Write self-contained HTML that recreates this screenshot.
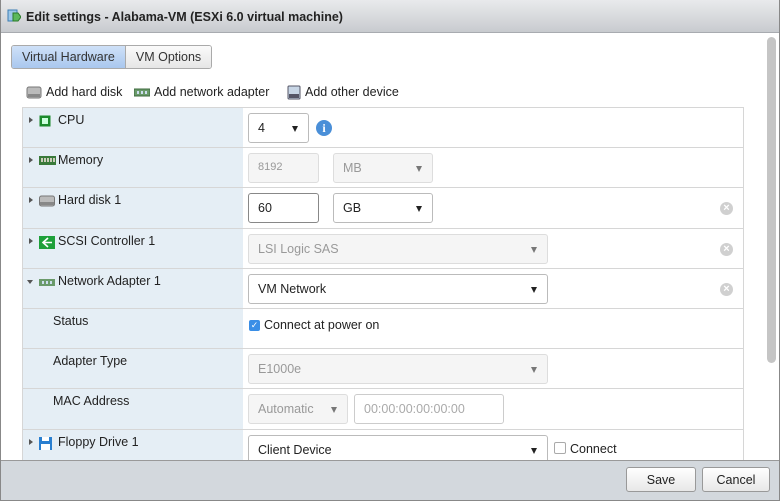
<!DOCTYPE html>
<html><head><style>
*{box-sizing:border-box;margin:0;padding:0}
body{width:780px;height:501px;overflow:hidden;font-family:"Liberation Sans",sans-serif;font-size:12px;color:#333;background:#fff;position:relative}
.win{position:absolute;left:0;top:0;width:780px;height:501px;border:1px solid #888;border-top:none;z-index:5;pointer-events:none}
.title{position:absolute;left:0;top:0;width:780px;height:33px;background:linear-gradient(#e9eaec,#c8cbcf);border-bottom:1px solid #a8abb0;font-weight:bold;font-size:12.5px;color:#222;padding:10px 0 0 26px}
.tabs{position:absolute;left:11px;top:45px;height:24px;display:flex;border:1px solid #aaa;border-radius:3px;overflow:hidden}
.tabs div{padding:4px 10px;font-size:12.5px}
.tabs .a{background:linear-gradient(#cfe1f8,#a9c7ee);border-right:1px solid #aaa}
.tabs .b{background:linear-gradient(#fafafa,#e6e6e6)}
.tool{position:absolute;top:85px;font-size:12.5px;color:#222}
.ico{display:inline-block;vertical-align:middle;margin-right:4px}
.tbl{position:absolute;left:22px;top:107px;width:722px;height:360px;border:1px solid #d6d6d6;border-bottom:none;overflow:hidden}
.lc{position:absolute;left:0;top:0;width:220px;height:100%;background:#e5eef5}
.row{position:absolute;left:0;width:722px;height:40px;border-bottom:1px solid #d6d6d6}
.lab{position:absolute;left:35px;top:5px;font-size:12.5px;color:#222}
.sub{left:30px}
.tri{position:absolute;left:6px;top:9px;width:0;height:0;border-top:3.5px solid transparent;border-bottom:3.5px solid transparent;border-left:4px solid #555}
.trid{position:absolute;left:4px;top:11px;border-left:3.5px solid transparent;border-right:3.5px solid transparent;border-top:4px solid #555}
.ic{position:absolute;left:16px;top:7px}
.f{position:absolute;top:5px;height:30px;border:1px solid #bbb;border-radius:3px;background:#fff;padding:7px 9px;font-size:12.5px;color:#222}
.f.d{background:#f5f5f5;border-color:#ddd;color:#999}
.ar{position:absolute;right:10px;top:12px;border-left:3.5px solid transparent;border-right:3.5px solid transparent;border-top:6px solid #222}
.f.d .ar{border-top-color:#777}
.x{position:absolute;left:697px;top:14px;width:13px;height:13px;border-radius:50%;background:#d0d0d0;color:#fff;font-size:11px;line-height:13px;text-align:center;font-weight:bold}
.foot{position:absolute;left:0;top:460px;width:780px;height:41px;background:#d3d8dd;border-top:1px solid #999}
.btn{position:absolute;top:467px;height:25px;border:1px solid #999;border-radius:3px;background:linear-gradient(#fff,#e8e8e8);font-size:12.5px;text-align:center;padding-top:5px;color:#222}
.sb{position:absolute;left:767px;top:37px;width:9px;height:326px;border-radius:5px;background:#c5c5c5}
</style></head><body>
<div class="title"><svg style="position:absolute;left:7px;top:9px" width="14" height="15"><rect x="1" y="1" width="9" height="11" fill="#9cc7e8" stroke="#3a7db5"/><path d="M6 4h5l3 4-3 4H6z" fill="#5cb85c" stroke="#2a7a2a"/></svg>Edit settings - Alabama-VM (ESXi 6.0 virtual machine)</div>
<div class="tabs"><div class="a">Virtual Hardware</div><div class="b">VM Options</div></div>
<div class="tool" style="left:26px"><svg class="ico" width="16" height="13"><rect x="1" y="1" width="14" height="11" rx="2" fill="#bbb" stroke="#777"/><rect x="2" y="8" width="12" height="3" fill="#888"/></svg>Add hard disk</div>
<div class="tool" style="left:134px"><svg class="ico" width="16" height="9"><rect x="0" y="1" width="16" height="7" fill="#6a9a6a" stroke="#3c6a3c"/><path d="M3 3h2v3H3zM7 3h2v3H7zM11 3h2v3h-2z" fill="#cde"/></svg>Add network adapter</div>
<div class="tool" style="left:287px"><svg class="ico" width="14" height="15"><rect x="1" y="1" width="12" height="13" rx="1" fill="#c8d6e6" stroke="#556"/><rect x="2" y="9" width="10" height="4" fill="#556"/></svg>Add other device</div>
<div class="tbl"><div class="lc"></div>
<div class="row" style="top:0"><div class="tri"></div><svg class="ic" width="12" height="12"><rect x="0.5" y="0.5" width="11" height="11" fill="#1c8a2c"/><rect x="3" y="3" width="6" height="6" fill="#cfd"/></svg><div class="lab">CPU</div><div class="f" style="left:225px;width:61px">4<span class="ar"></span></div><div style="position:absolute;left:293px;top:12px;width:16px;height:16px;border-radius:50%;background:#4a8fd8;color:#fff;font-weight:bold;text-align:center;font-size:12px;line-height:16px;font-family:'Liberation Serif',serif">i</div></div>
<div class="row" style="top:40px"><div class="tri"></div><svg class="ic" width="17" height="11"><rect x="0" y="1" width="17" height="9" fill="#3a7a3a"/><path d="M2 3h2v4H2zM5 3h2v4H5zM8 3h2v4H8zM11 3h2v4h-2zM14 3h2v4h-2z" fill="#ccb"/></svg><div class="lab">Memory</div><div class="f d" style="left:225px;width:71px;font-size:11px">8192</div><div class="f d" style="left:310px;width:100px">MB<span class="ar"></span></div></div>
<div class="row" style="top:80px;height:41px"><div class="tri"></div><svg class="ic" width="16" height="12"><rect x="0.5" y="1" width="15" height="10" rx="2" fill="#bbb" stroke="#777"/><rect x="1" y="7" width="14" height="3" fill="#888"/></svg><div class="lab">Hard disk 1</div><div class="f" style="left:225px;width:71px;border-color:#888">60</div><div class="f" style="left:310px;width:100px">GB<span class="ar"></span></div><div class="x">×</div></div>
<div class="row" style="top:121px"><div class="tri"></div><svg class="ic" width="16" height="13"><rect x="0" y="0" width="16" height="13" fill="#1ea03a"/><path d="M9 2L4 6.5 9 11M5 6.5h8" stroke="#fff" stroke-width="1.6" fill="none"/></svg><div class="lab">SCSI Controller 1</div><div class="f d" style="left:225px;width:300px">LSI Logic SAS<span class="ar"></span></div><div class="x">×</div></div>
<div class="row" style="top:161px"><div class="trid"></div><svg class="ic" width="16" height="9" style="top:9px"><rect x="0" y="1" width="16" height="7" fill="#6a9a6a"/><path d="M3 3h2v3H3zM7 3h2v3H7zM11 3h2v3h-2z" fill="#cde"/></svg><div class="lab">Network Adapter 1</div><div class="f" style="left:225px;width:300px">VM Network<span class="ar"></span></div><div class="x">×</div></div>
<div class="row" style="top:201px"><div class="lab sub">Status</div><div style="position:absolute;left:226px;top:11px;width:11px;height:11px;border-radius:2px;background:#3a8ee6;color:#fff;font-size:9px;line-height:11px;text-align:center">✓</div><div style="position:absolute;left:241px;top:9px;font-size:12.5px;color:#222">Connect at power on</div></div>
<div class="row" style="top:241px"><div class="lab sub">Adapter Type</div><div class="f d" style="left:225px;width:300px">E1000e<span class="ar"></span></div></div>
<div class="row" style="top:281px;height:41px"><div class="lab sub">MAC Address</div><div class="f d" style="left:225px;width:100px">Automatic<span class="ar"></span></div><div class="f" style="left:331px;width:150px;color:#aaa;border-color:#ccc">00:00:00:00:00:00</div></div>
<div class="row" style="top:322px"><div class="tri"></div><svg class="ic" width="13" height="13"><rect x="0" y="0" width="13" height="13" fill="#2a7fd0"/><rect x="3" y="0" width="7" height="4" fill="#fff"/><rect x="2" y="7" width="9" height="6" fill="#fff"/></svg><div class="lab">Floppy Drive 1</div><div class="f" style="left:225px;width:300px">Client Device<span class="ar"></span></div><div style="position:absolute;left:531px;top:12px;width:12px;height:12px;border:1px solid #aaa;border-radius:2px"></div><div style="position:absolute;left:547px;top:12px;font-size:12.5px;color:#222">Connect</div></div>
</div>
<div class="sb"></div>
<div class="foot"></div>
<div class="btn" style="left:626px;width:70px">Save</div>
<div class="btn" style="left:702px;width:68px">Cancel</div>
<div class="win"></div>
</body></html>
